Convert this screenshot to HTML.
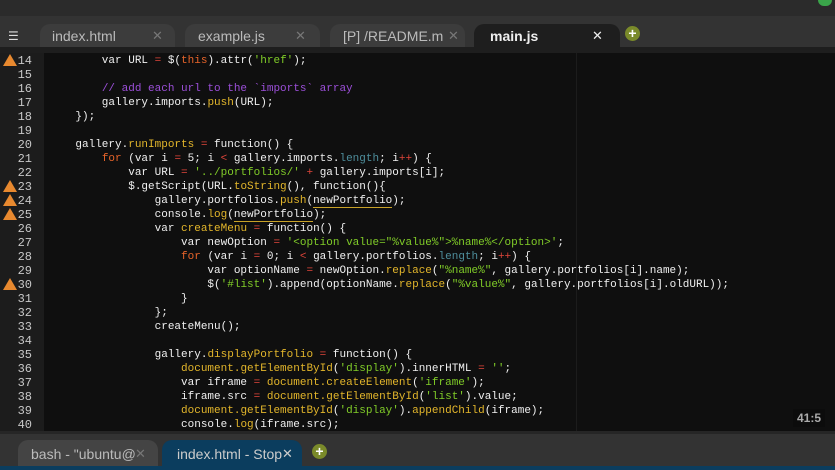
<!DOCTYPE html>
<html><head><meta charset="utf-8"><style>
*{margin:0;padding:0;box-sizing:border-box}
body{width:835px;height:470px;overflow:hidden;background:#0f0f0f;font-family:"Liberation Sans",sans-serif;position:relative}
#top{position:absolute;left:0;top:0;width:835px;height:16px;background:#2b2b2b}
#tabs{position:absolute;left:0;top:16px;width:835px;height:31px;background:#333}
#tabs2{position:absolute;left:0;top:47px;width:835px;height:6px;background:#1e1e1e}
.tab{position:absolute;top:24px;height:23px;background:#3c3c3c;border-radius:10px 10px 0 0;color:#bbb;font-size:14px;line-height:24px}
.tab .x{position:absolute;color:#777;font-size:13px}
#gut{position:absolute;left:0;top:53px;width:44px;height:378px;background:#1c1c1c}
pre{position:absolute;top:54px;font-family:"Liberation Mono",monospace;font-size:11px;line-height:14px;color:#f0f0f0}
#nums{left:0;width:32px;text-align:right;color:#c8c8c8;font-size:12px}
#code{left:49px}
.k{color:#e8642a}.f{color:#e3b62b}.s{color:#80cc28}.c{color:#9b4fd8}.t{color:#4e8e9c}.o{color:#e0453a}
.u{border-bottom:1px solid #c9a227}
.warn{position:absolute;left:3px;width:0;height:0;border-left:7px solid transparent;border-right:7px solid transparent;border-bottom:12px solid #e8892f}
#bot{position:absolute;left:0;top:431px;width:835px;height:35px;background:#333;border-top:3px solid #262626}
#blue{position:absolute;left:0;top:466px;width:835px;height:4px;background:#0b3d5e}
.plus{position:absolute;width:15px;height:15px;border-radius:50%;background:#7a8a2a;color:#fff;font-size:14px;line-height:14px;text-align:center;font-weight:bold}
</style></head><body>
<div id="top"></div>
<div style="position:absolute;left:818px;top:0;width:14px;height:6px;background:#3aa54a;border-radius:0 0 7px 7px"></div>
<div id="tabs"></div><div id="tabs2"></div>
<div style="position:absolute;left:8px;top:29px;color:#ddd;font-size:12px">&#9776;</div>
<div class="tab" style="left:40px;width:135px;padding-left:12px">index.html<span class="x" style="left:112px">✕</span></div>
<div class="tab" style="left:185px;width:135px;padding-left:13px">example.js<span class="x" style="left:110px">✕</span></div>
<div class="tab" style="left:330px;width:135px;padding-left:13px">[P] /README.m<span class="x" style="left:118px">✕</span></div>
<div class="tab" style="left:474px;width:146px;background:#1e1e1e;color:#eee;font-weight:bold;padding-left:16px">main.js<span class="x" style="left:118px;color:#eee;font-weight:normal">✕</span></div>
<div class="plus" style="left:625px;top:26px">+</div>
<div id="gut"></div>
<div style="position:absolute;left:576px;top:53px;width:1px;height:378px;background:#1c1c1c"></div>
<div class="warn" style="top:54px"></div><div class="warn" style="top:180px"></div><div class="warn" style="top:194px"></div><div class="warn" style="top:208px"></div><div class="warn" style="top:278px"></div>
<pre id="nums">14
15
16
17
18
19
20
21
22
23
24
25
26
27
28
29
30
31
32
33
34
35
36
37
38
39
40</pre>
<pre id="code">        var URL <span class="o">=</span> $(<span class="k">this</span>).attr(<span class="s">'href'</span>);

        <span class="c">// add each url to the `imports` array</span>
        gallery.imports.<span class="f">push</span>(URL);
    });

    gallery.<span class="f">runImports</span> <span class="o">=</span> function() {
        <span class="k">for</span> (var i <span class="o">=</span> 5; i <span class="o">&lt;</span> gallery.imports.<span class="t">length</span>; i<span class="o">++</span>) {
            var URL <span class="o">=</span> <span class="s">'../portfolios/'</span> <span class="o">+</span> gallery.imports[i];
            $.getScript(URL.<span class="f">toString</span>(), function(){
                gallery.portfolios.<span class="f">push</span>(<span class="u">newPortfolio</span>);
                console.<span class="f">log</span>(<span class="u">newPortfolio</span>);
                var <span class="f">createMenu</span> <span class="o">=</span> function() {
                    var newOption <span class="o">=</span> <span class="s">'&lt;option value="%value%"&gt;%name%&lt;/option&gt;'</span>;
                    <span class="k">for</span> (var i <span class="o">=</span> 0; i <span class="o">&lt;</span> gallery.portfolios.<span class="t">length</span>; i<span class="o">++</span>) {
                        var optionName <span class="o">=</span> newOption.<span class="f">replace</span>(<span class="s">"%name%"</span>, gallery.portfolios[i].name);
                        $(<span class="s">'#list'</span>).append(optionName.<span class="f">replace</span>(<span class="s">"%value%"</span>, gallery.portfolios[i].oldURL));
                    }
                };
                createMenu();

                gallery.<span class="f">displayPortfolio</span> <span class="o">=</span> function() {
                    <span class="f">document.getElementById</span>(<span class="s">'display'</span>).innerHTML <span class="o">=</span> <span class="s">''</span>;
                    var iframe <span class="o">=</span> <span class="f">document.createElement</span>(<span class="s">'iframe'</span>);
                    iframe.src <span class="o">=</span> <span class="f">document.getElementById</span>(<span class="s">'list'</span>).value;
                    <span class="f">document.getElementById</span>(<span class="s">'display'</span>).<span class="f">appendChild</span>(iframe);
                    console.<span class="f">log</span>(iframe.src);</pre>
<div style="position:absolute;left:793px;top:409px;padding:2px 4px;background:#0c0c0c;color:#aaa;font-size:12px;font-weight:bold">41:5</div>
<div id="bot"></div>
<div class="tab" style="left:18px;top:440px;height:26px;width:140px;background:#444;padding-left:13px;line-height:28px">bash - "ubuntu@<span class="x" style="left:117px;top:0">✕</span></div>
<div class="tab" style="left:162px;top:440px;height:26px;width:140px;background:#0b3d5e;color:#ccc;padding-left:15px;line-height:28px">index.html - Stop<span class="x" style="left:120px;top:0;color:#ccc">✕</span></div>
<div class="plus" style="left:312px;top:444px">+</div>
<div id="blue"></div>
</body></html>
